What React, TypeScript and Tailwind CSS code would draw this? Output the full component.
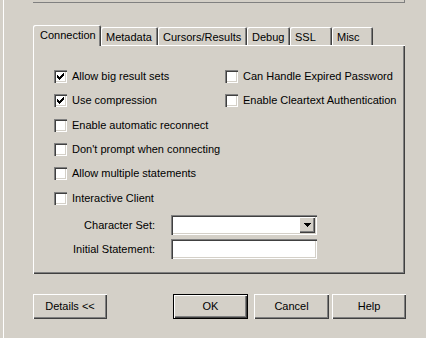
import React from "react";

const raised =
  "shadow-[inset_1px_1px_#ffffff,inset_-1px_-1px_#404040,inset_-2px_-2px_#808080]";
const sunken =
  "shadow-[inset_1px_1px_#808080,inset_2px_2px_#404040,inset_-1px_-1px_#ffffff,inset_-2px_-2px_#d4d0c8]";

const CheckMark = () => (
  <svg width="7" height="7" viewBox="0 0 7 7" shapeRendering="crispEdges">
    <rect x="6" y="0" width="1" height="3" fill="#000" />
    <rect x="5" y="1" width="1" height="3" fill="#000" />
    <rect x="4" y="2" width="1" height="3" fill="#000" />
    <rect x="3" y="3" width="1" height="3" fill="#000" />
    <rect x="2" y="4" width="1" height="3" fill="#000" />
    <rect x="1" y="3" width="1" height="3" fill="#000" />
    <rect x="0" y="2" width="1" height="3" fill="#000" />
  </svg>
);

const Check = ({ label, checked }: { label: string; checked?: boolean }) => (
  <div className="flex items-center h-[24px]">
    <div className={`w-[13px] h-[13px] bg-white flex items-center justify-center ${sunken}`}>
      {checked && <CheckMark />}
    </div>
    <span className="ml-[5px] whitespace-nowrap">{label}</span>
  </div>
);

const tabs = [
  { name: "Metadata", w: "w-[57px]" },
  { name: "Cursors/Results", w: "w-[89px]" },
  { name: "Debug", w: "w-[43px]" },
  { name: "SSL", w: "w-[42px]" },
  { name: "Misc", w: "w-[41px]" },
];

const Button = ({ label, w, isDefault }: { label: string; w: string; isDefault?: boolean }) =>
  isDefault ? (
    <div className={`${w} h-[25px] border border-black bg-[#d4d0c8]`}>
      <div className={`w-full h-full flex items-center justify-center ${raised}`}>{label}</div>
    </div>
  ) : (
    <div className={`${w} h-[25px] flex items-center justify-center bg-[#d4d0c8] ${raised}`}>{label}</div>
  );

export default function App() {
  return (
    <div
      className="w-[426px] h-[338px] bg-[#d4d0c8] overflow-hidden text-[11px] text-black leading-none"
      style={{ fontFamily: '"Liberation Sans", Arial, sans-serif' }}
    >
      <div className="ml-[3px] h-full border-l border-white pl-[29px]">
        <div className="w-[372px] h-[3px] border-b border-r border-[#808080]" />

        <div className="mt-[22px] flex items-end h-[20px]">
          <div className="relative z-10 w-[68px] h-[21px] -mb-[1px] bg-[#d4d0c8] rounded-t-[2px] shadow-[inset_1px_1px_#ffffff,inset_-1px_0_#404040,inset_-2px_0_#808080] pl-[7px] pt-[5px]">
            Connection
          </div>
          {tabs.map((t) => (
            <div
              key={t.name}
              className={`${t.w} h-[18px] rounded-t-[2px] shadow-[inset_1px_1px_#ffffff,inset_-1px_0_#404040,inset_-2px_0_#808080] pl-[5px] pt-[5px] whitespace-nowrap`}
            >
              {t.name}
            </div>
          ))}
        </div>

        <div className={`w-[372px] h-[229px] ${raised} pt-[19px]`}>
          <div className="flex">
            <div className="ml-[21px] w-[171px] flex flex-col">
              <Check label="Allow big result sets" checked />
              <Check label="Use compression" checked />
              <div className="h-[1px]" />
              <Check label="Enable automatic reconnect" />
              <Check label="Don't prompt when connecting" />
              <Check label="Allow multiple statements" />
              <div className="h-[1px]" />
              <Check label="Interactive Client" />
            </div>
            <div className="flex flex-col">
              <Check label="Can Handle Expired Password" />
              <Check label="Enable Cleartext Authentication" />
            </div>
          </div>

          <div className="mt-[5px] flex items-center">
            <div className="w-[122px] text-right">Character Set:</div>
            <div className={`ml-[16px] w-[146px] h-[20px] bg-white ${sunken} p-[2px] flex justify-end`}>
              <div className={`w-[16px] h-[16px] bg-[#d4d0c8] flex items-center justify-center ${raised}`}>
                <svg width="7" height="4" viewBox="0 0 7 4" shapeRendering="crispEdges">
                  <path d="M0 0h7v1H0zM1 1h5v1H1zM2 2h3v1H2zM3 3h1v1H3z" fill="#000" />
                </svg>
              </div>
            </div>
          </div>
          <div className="mt-[4px] flex items-center">
            <div className="w-[122px] text-right">Initial Statement:</div>
            <div className={`ml-[16px] w-[146px] h-[20px] bg-white ${sunken}`} />
          </div>
        </div>

        <div className="mt-[20px] flex w-[373px]">
          <Button label="Details <<" w="w-[74px]" />
          <div className="ml-[66px]">
            <Button label="OK" w="w-[75px]" isDefault />
          </div>
          <div className="ml-[6px]">
            <Button label="Cancel" w="w-[75px]" />
          </div>
          <div className="ml-[3px]">
            <Button label="Help" w="w-[74px]" />
          </div>
        </div>
      </div>
    </div>
  );
}
